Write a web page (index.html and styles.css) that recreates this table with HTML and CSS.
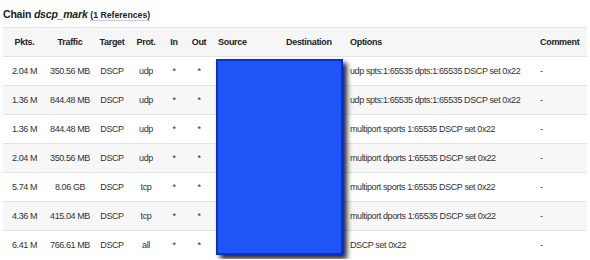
FILE: index.html
```html
<!DOCTYPE html>
<html>
<head>
<meta charset="utf-8">
<link rel="stylesheet" href="styles.css">
</head>
<body>
<div class="page">
  <h3 class="title">Chain <em>dscp_mark</em> <span class="refs">(1 References)</span></h3>
  <div class="wrap">
    <table class="rules">
      <colgroup>
        <col class="c-pkts"><col class="c-traffic"><col class="c-target"><col class="c-prot"><col class="c-in"><col class="c-out"><col class="c-src"><col class="c-dst"><col class="c-opt"><col class="c-cmt">
      </colgroup>
      <thead>
        <tr>
          <th class="ctr">Pkts.</th><th class="ctr">Traffic</th><th class="ctr">Target</th><th class="ctr">Prot.</th><th class="ctr">In</th><th class="ctr">Out</th><th>Source</th><th>Destination</th><th>Options</th><th>Comment</th>
        </tr>
      </thead>
      <tbody>
        <tr><td class="ctr">2.04 M</td><td class="ctr">350.56 MB</td><td class="ctr">DSCP</td><td class="ctr">udp</td><td class="ctr">*</td><td class="ctr">*</td><td></td><td></td><td>udp spts:1:65535 dpts:1:65535 DSCP set 0x22</td><td>-</td></tr>
        <tr><td class="ctr">1.36 M</td><td class="ctr">844.48 MB</td><td class="ctr">DSCP</td><td class="ctr">udp</td><td class="ctr">*</td><td class="ctr">*</td><td></td><td></td><td>udp spts:1:65535 dpts:1:65535 DSCP set 0x22</td><td>-</td></tr>
        <tr><td class="ctr">1.36 M</td><td class="ctr">844.48 MB</td><td class="ctr">DSCP</td><td class="ctr">udp</td><td class="ctr">*</td><td class="ctr">*</td><td></td><td></td><td>multiport sports 1:65535 DSCP set 0x22</td><td>-</td></tr>
        <tr><td class="ctr">2.04 M</td><td class="ctr">350.56 MB</td><td class="ctr">DSCP</td><td class="ctr">udp</td><td class="ctr">*</td><td class="ctr">*</td><td></td><td></td><td>multiport dports 1:65535 DSCP set 0x22</td><td>-</td></tr>
        <tr><td class="ctr">5.74 M</td><td class="ctr">8.06 GB</td><td class="ctr">DSCP</td><td class="ctr">tcp</td><td class="ctr">*</td><td class="ctr">*</td><td></td><td></td><td>multiport sports 1:65535 DSCP set 0x22</td><td>-</td></tr>
        <tr><td class="ctr">4.36 M</td><td class="ctr">415.04 MB</td><td class="ctr">DSCP</td><td class="ctr">tcp</td><td class="ctr">*</td><td class="ctr">*</td><td></td><td></td><td>multiport dports 1:65535 DSCP set 0x22</td><td>-</td></tr>
        <tr><td class="ctr">6.41 M</td><td class="ctr">766.61 MB</td><td class="ctr">DSCP</td><td class="ctr">all</td><td class="ctr">*</td><td class="ctr">*</td><td></td><td></td><td>DSCP set 0x22</td><td>-</td></tr>
      </tbody>
    </table>
    <div class="redact"></div>
  </div>
</div>
</body>
</html>
```
FILE: styles.css
```css
html, body {
  margin: 0;
  padding: 0;
  background: #fff;
}
body {
  font-family: "Liberation Sans", Arial, sans-serif;
  color: #333;
}
.page {
  padding: 0 3px;
}
.title {
  margin: 0;
  height: 27px;
  padding-top: 7px;
  box-sizing: border-box;
  font-size: 10.5px;
  letter-spacing: -0.2px;
  font-weight: bold;
  color: #222;
  line-height: 14px;
}
.title em {
  font-style: italic;
}
.refs {
  font-size: 8.7px;
  letter-spacing: 0;
  border-bottom: 1px solid #c9c6ef;
}
.wrap {
  position: relative;
}
.rules {
  width: 584px;
  table-layout: fixed;
  border-collapse: collapse;
  font-size: 9px;
  letter-spacing: -0.4px;
}
.c-pkts { width: 43px; }
.c-traffic { width: 48px; }
.c-target { width: 36px; }
.c-prot { width: 32px; }
.c-in { width: 24px; }
.c-out { width: 26px; }
.c-src { width: 68px; }
.c-dst { width: 64px; }
.c-opt { width: 190px; }
.c-cmt { width: 53px; }
.rules th, .rules td {
  height: 28px;
  padding: 0 6px;
  text-align: left;
  white-space: nowrap;
  border-top: 1px solid #e3e3e3;
  vertical-align: middle;
}
.rules th {
  font-weight: bold;
  font-size: 9px;
  letter-spacing: -0.3px;
  color: #222;
  background: #f6f6f6;
}
.rules th.ctr, .rules td.ctr {
  text-align: center;
  padding: 0;
}
.rules tbody tr:nth-child(even) td {
  background: #f7f7f7;
}
.redact {
  position: absolute;
  left: 213px;
  top: 32px;
  width: 127px;
  height: 196px;
  box-sizing: border-box;
  background: #1f55f6;
  border: 2px solid #0a2fc4;
  box-shadow: 4px 4px 5px rgba(0, 0, 0, 0.85);
}
```
